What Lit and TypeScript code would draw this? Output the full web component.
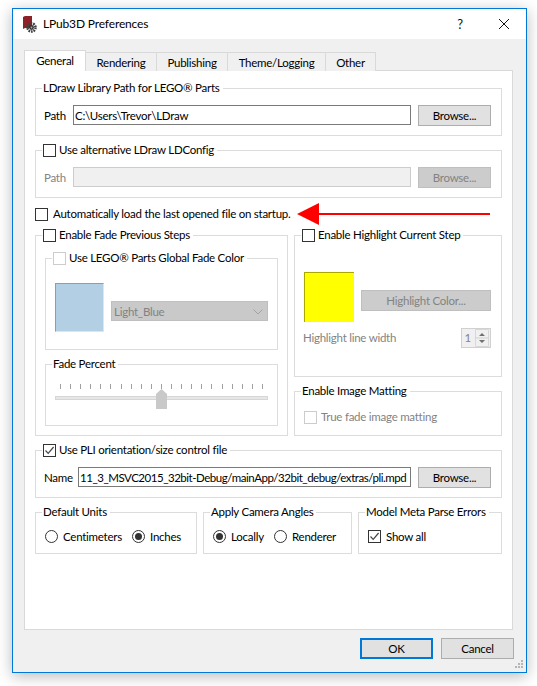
import { LitElement, html, css, svg } from "lit";
import { customElement } from "lit/decorators.js";

const ticks = Array.from({ length: 21 }, (_, i) => i);

@customElement("app-root")
export class AppRoot extends LitElement {
  static styles = css`
    :host {
      display: block;
      width: 537px;
      height: 686px;
      box-sizing: border-box;
      padding: 8px 10px 13px 12px;
      background: #fff;
      font-family: "Lato", "Open Sans", sans-serif;
      font-size: 11.5px;
      letter-spacing: -0.25px;
      line-height: 14px;
      color: #000;
      overflow: hidden;
    }
    * { box-sizing: border-box; }
    .window {
      position: relative;
      height: 665px;
      border: 1px solid #0078d7;
      background: #f0f0f0;
      box-shadow: 0 3px 14px rgba(0, 0, 0, 0.28);
      display: flex;
      flex-direction: column;
    }
    .titlebar {
      height: 30px;
      background: #fff;
      display: flex;
      align-items: center;
      padding-left: 10px;
      flex: none;
    }
    .titlebar .title { margin-left: 6px; font-size: 12px; letter-spacing: -0.15px; }
    .titlebar .help { margin-left: auto; font-size: 13px; width: 12px; text-align: center; color: #111; }
    .titlebar .close { margin: 0 17px 0 33px; display: block; }
    .main {
      flex: 1;
      display: flex;
      flex-direction: column;
      padding: 11px 13px 0 11px;
    }
    .tabs { display: flex; height: 21px; position: relative; z-index: 1; flex: none; }
    .tab {
      height: 19px;
      margin-top: 2px;
      border: 1px solid #d9d9d9;
      border-left: 0;
      border-bottom: 0;
      background: #f0f0f0;
      text-align: center;
      line-height: 19px;
    }
    .tab.active {
      height: 21px;
      margin-top: 0;
      background: #fff;
      border-left: 1px solid #d9d9d9;
      line-height: 20px;
    }
    .pane {
      height: 560px;
      margin-top: -1px;
      flex: none;
      background: #fff;
      border: 1px solid #d9d9d9;
      padding: 10px 10px 0 10px;
      display: flex;
      flex-direction: column;
      gap: 7px;
    }
    fieldset {
      margin: 0;
      padding: 0;
      min-width: 0;
      border: 1px solid #dcdcdc;
      display: block;
    }
    legend {
      margin-left: 6px;
      padding: 0 3px 0 1px;
      height: 14px;
      display: flex;
      align-items: center;
      white-space: nowrap;
    }
    .chk {
      width: 13px;
      height: 13px;
      border: 1px solid #333;
      background: #fff;
      flex: none;
      display: block;
    }
    .chk.off { border-color: #ccc; }
    legend .chk { margin-right: 3px; }
    .g1 { height: 55px; }
    .row {
      display: flex;
      align-items: flex-start;
      padding: 10px 10px 0 8px;
    }
    .lbl { line-height: 21px; flex: none; }
    .lbl.path { width: 29px; }
    .lbl.name { width: 34px; }
    .input {
      flex: 1;
      min-width: 0;
      height: 20px;
      border: 1px solid #7a7a7a;
      background: #fff;
      padding-left: 1px;
      line-height: 19px;
      white-space: nowrap;
      overflow: hidden;
    }
    .input.off { border-color: #ccc; background: #f0f0f0; }
    .input.long { letter-spacing: -0.47px; }
    .btn {
      flex: none;
      width: 73px;
      height: 21px;
      border: 1px solid #adadad;
      background: #e1e1e1;
      text-align: center;
      line-height: 19px;
    }
    .row .btn { margin-left: 7px; }
    .btn.off { background: #ccc; border-color: #bfbfbf; color: #838383; }
    .dim { color: #838383; }
    .auto {
      position: relative;
      height: 14px;
      margin-top: 2px;
      display: flex;
      align-items: center;
      flex: none;
    }
    .auto .chk { margin-right: 5px; }
    .arrow { position: absolute; left: 262px; top: -4px; display: block; }
    .cols { display: grid; grid-template-columns: 253px 208px; gap: 6px; flex: none; height: 208px; }
    .fade { height: 208px; }
    .fade-body { padding: 9px 9px 0 9px; display: flex; flex-direction: column; gap: 7px; }
    .inner { height: 99px; }
    .inner-row { display: flex; align-items: flex-start; gap: 7px; padding: 18px 9px 0 9px; }
    .swatch { width: 49px; height: 49px; flex: none; border-top: 1px solid #8e9ea9; border-left: 1px solid #8e9ea9; }
    .swatch.blue { background: #b3cfe3; border-right: 1px solid #d6e8f6; border-bottom: 1px solid #d6e8f6; }
    .swatch.yellow { background: #ffff00; border-color: #a8a800; width: 50px; height: 50px; }
    .combo {
      flex: 1;
      height: 20px;
      margin-top: 18px;
      background: #c9c9c9;
      border: 1px solid #bfbfbf;
      color: #838383;
      display: flex;
      align-items: center;
      justify-content: space-between;
      padding: 1px 4px 0 2px;
    }
    .percent { height: 69px; }
    .slider { display: flex; flex-direction: column; padding: 13px 9px 0 9px; }
    .ticks { display: flex; justify-content: space-between; padding: 0 5px 0 5px; height: 5px; }
    .ticks i { display: block; width: 1px; height: 5px; background: #a0a0a0; }
    .track { position: relative; height: 4px; margin-top: 7px; background: #e7e7e7; border: 1px solid #d6d6d6; }
    .thumb { position: absolute; left: 100px; top: -8px; display: block; }
    .right { display: flex; flex-direction: column; gap: 7px; }
    .hl { height: 149px; }
    .hl-body { padding: 30px 10px 0 9px; }
    .hl-row { display: flex; gap: 7px; }
    .hl-row .btn { flex: 1; margin-top: 18px; }
    .hl-width { display: flex; justify-content: space-between; align-items: center; margin: 6px 0 0 -1px; }
    .spin {
      width: 30px;
      height: 20px;
      border: 1px solid #d0d0d0;
      background: #f0f0f0;
      display: flex;
      color: #838383;
    }
    .spin .v { flex: 1; text-align: right; padding-right: 4px; line-height: 18px; }
    .spin .b { width: 14px; margin-right: 1px; display: block; }
    .matting { height: 52px; }
    .matting-row { display: flex; align-items: center; gap: 4px; padding: 12px 0 0 9px; color: #838383; }
    .bottom { display: grid; grid-template-columns: 162px 149px 144px; gap: 6px; flex: none; }
    .bottom fieldset { height: 49px; }
    .opts { display: flex; align-items: center; padding: 11px 0 0 9px; height: 24px; }
    .opt { display: flex; align-items: center; flex: none; }
    .opt svg { margin-right: 5px; flex: none; display: block; }
    .opt.w1 { width: 87px; }
    .opt.w2 { width: 61px; }
    .footer { display: flex; justify-content: flex-end; gap: 8px; margin: 8px -1px 0 0; }
    .btn.primary { border: 2px solid #0078d7; line-height: 17px; }
    .grip { position: absolute; right: 2px; bottom: 2px; display: block; }
  `;

  private radio(on: boolean) {
    return html`<svg width="13" height="13" viewBox="0 0 13 13">
      <circle cx="6.5" cy="6.5" r="6" fill="#fff" stroke="#333"></circle>
      ${on ? svg`<circle cx="6.5" cy="6.5" r="3.5" fill="#333"></circle>` : ""}
    </svg>`;
  }

  private check() {
    return html`<svg class="chk" viewBox="0 0 11 11">
      <path d="M1.5 5.5 L4.2 8.3 L9.6 2" fill="none" stroke="#444" stroke-width="1.2"></path>
    </svg>`;
  }

  render() {
    return html`
      <div class="window">
        <div class="titlebar">
          <svg width="14" height="17" viewBox="0 0 14 17">
            <path d="M0 1 L2 0 H9 V12 H2 L0 13 Z" fill="#8c2128"></path>
            <circle cx="8.5" cy="11.5" r="4" fill="none" stroke="#3f3f3f" stroke-width="2.6" stroke-dasharray="1.6 0.9"></circle>
            <circle cx="8.5" cy="11.5" r="2.4" fill="#333"></circle>
            <circle cx="8.5" cy="11.5" r="0.9" fill="#aaa"></circle>
          </svg>
          <span class="title">LPub3D Preferences</span>
          <span class="help">?</span>
          <svg class="close" width="10" height="10" viewBox="0 0 10 10">
            <path d="M0 0 L10 10 M10 0 L0 10" stroke="#111" stroke-width="1" fill="none"></path>
          </svg>
        </div>
        <div class="main">
          <div class="tabs">
            <div class="tab active" style="width:62px">General</div>
            <div class="tab" style="width:71px">Rendering</div>
            <div class="tab" style="width:71px">Publishing</div>
            <div class="tab" style="width:98px">Theme/Logging</div>
            <div class="tab" style="width:50px">Other</div>
          </div>
          <div class="pane">
            <fieldset class="g1">
              <legend>LDraw Library Path for LEGO® Parts</legend>
              <div class="row">
                <span class="lbl path">Path</span>
                <div class="input">C:\\Users\\Trevor\\LDraw</div>
                <div class="btn">Browse...</div>
              </div>
            </fieldset>
            <fieldset class="g1">
              <legend><span class="chk"></span>Use alternative LDraw LDConfig</legend>
              <div class="row">
                <span class="lbl path dim">Path</span>
                <div class="input off"></div>
                <div class="btn off">Browse...</div>
              </div>
            </fieldset>
            <div class="auto">
              <span class="chk"></span>Automatically load the last opened file on startup.
              <svg class="arrow" width="193" height="22" viewBox="0 0 193 22">
                <path d="M0 11 L22 0 V10 H193 V12 H22 V22 Z" fill="#f00"></path>
              </svg>
            </div>
            <div class="cols">
              <fieldset class="fade">
                <legend><span class="chk"></span>Enable Fade Previous Steps</legend>
                <div class="fade-body">
                  <fieldset class="inner">
                    <legend><span class="chk off"></span>Use LEGO® Parts Global Fade Color</legend>
                    <div class="inner-row">
                      <div class="swatch blue"></div>
                      <div class="combo">
                        <span>Light_Blue</span>
                        <svg width="10" height="6" viewBox="0 0 10 6">
                          <path d="M0.5 0.5 L5 5 L9.5 0.5" fill="none" stroke="#a3a3a3"></path>
                        </svg>
                      </div>
                    </div>
                  </fieldset>
                  <fieldset class="percent">
                    <legend>Fade Percent</legend>
                    <div class="slider">
                      <div class="ticks">${ticks.map(() => html`<i></i>`)}</div>
                      <div class="track">
                        <svg class="thumb" width="11" height="20" viewBox="0 0 11 20">
                          <path d="M0 5 L5.5 0 L11 5 V20 H0 Z" fill="#c9c9c9"></path>
                        </svg>
                      </div>
                    </div>
                  </fieldset>
                </div>
              </fieldset>
              <div class="right">
                <fieldset class="hl">
                  <legend><span class="chk"></span>Enable Highlight Current Step</legend>
                  <div class="hl-body">
                    <div class="hl-row">
                      <div class="swatch yellow"></div>
                      <div class="btn off">Highlight Color...</div>
                    </div>
                    <div class="hl-width">
                      <span class="dim">Highlight line width</span>
                      <div class="spin">
                        <span class="v">1</span>
                        <svg class="b" viewBox="0 0 14 18">
                          <path d="M0.5 0.5 H13.5 V17.5 H0.5 Z" fill="none" stroke="#d8d8d8"></path>
                          <path d="M4 7 L7 4 L10 7 Z M4 11 L7 14 L10 11 Z" fill="#707070"></path>
                          <path d="M0 9 H14" stroke="#d0d0d0"></path>
                        </svg>
                      </div>
                    </div>
                  </div>
                </fieldset>
                <fieldset class="matting">
                  <legend>Enable Image Matting</legend>
                  <div class="matting-row"><span class="chk off"></span>True fade image matting</div>
                </fieldset>
              </div>
            </div>
            <fieldset class="g1">
              <legend>${this.check()}Use PLI orientation/size control file</legend>
              <div class="row">
                <span class="lbl name">Name</span>
                <div class="input long">11_3_MSVC2015_32bit-Debug/mainApp/32bit_debug/extras/pli.mpd</div>
                <div class="btn">Browse...</div>
              </div>
            </fieldset>
            <div class="bottom">
              <fieldset>
                <legend>Default Units</legend>
                <div class="opts">
                  <span class="opt w1">${this.radio(false)}Centimeters</span>
                  <span class="opt">${this.radio(true)}Inches</span>
                </div>
              </fieldset>
              <fieldset>
                <legend>Apply Camera Angles</legend>
                <div class="opts">
                  <span class="opt w2">${this.radio(true)}Locally</span>
                  <span class="opt">${this.radio(false)}Renderer</span>
                </div>
              </fieldset>
              <fieldset>
                <legend>Model Meta Parse Errors</legend>
                <div class="opts">
                  <span class="opt">${this.check()}Show all</span>
                </div>
              </fieldset>
            </div>
          </div>
          <div class="footer">
            <div class="btn primary">OK</div>
            <div class="btn">Cancel</div>
          </div>
        </div>
        <svg class="grip" width="10" height="10" viewBox="0 0 10 10" fill="#b5b5b5">
          <rect x="7" y="0" width="2" height="2"></rect>
          <rect x="4" y="3" width="2" height="2"></rect><rect x="7" y="3" width="2" height="2"></rect>
          <rect x="1" y="6" width="2" height="2"></rect><rect x="4" y="6" width="2" height="2"></rect><rect x="7" y="6" width="2" height="2"></rect>
        </svg>
      </div>
    `;
  }
}
